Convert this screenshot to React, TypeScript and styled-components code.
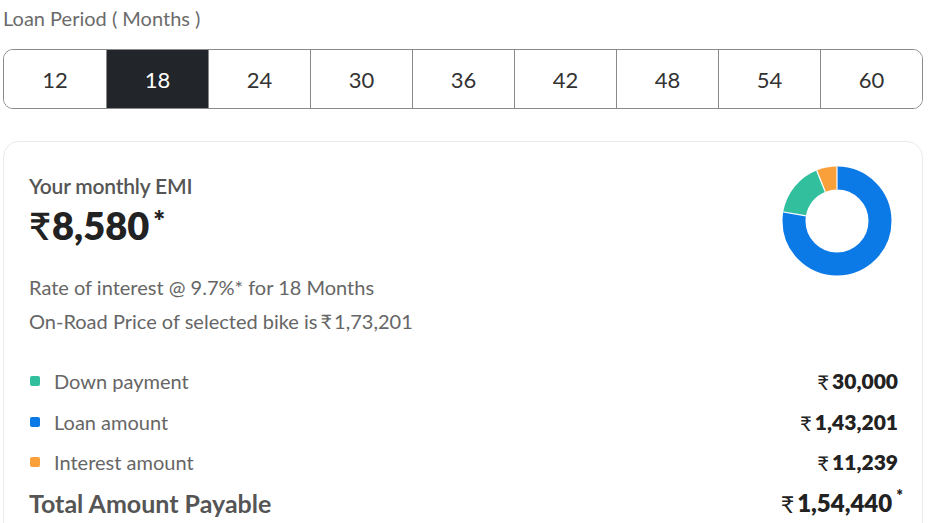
import React from "react";
import styled, { createGlobalStyle } from "styled-components";

const Global = createGlobalStyle`
  html, body { margin: 0; padding: 0; background: #ffffff; }
  body { font-family: Lato, "Noto Sans", sans-serif; }
`;

const Page = styled.div`
  padding: 6px 7px 0 3px;
  width: 930px;
  box-sizing: border-box;
  height: 523px;
  overflow: hidden;
`;

const Label = styled.div`
  font-size: 20px;
  line-height: 24px;
  color: #6b6b6b;
`;

const Segments = styled.div`
  margin-top: 19px;
  display: grid;
  grid-template-columns: repeat(9, 1fr);
  border: 1px solid #8a8a8a;
  border-radius: 10px;
  overflow: hidden;
  height: 60px;
  box-sizing: border-box;
`;

const Segment = styled.div<{ $active?: boolean }>`
  display: flex;
  align-items: center;
  justify-content: center;
  font-size: 22px;
  color: ${(p) => (p.$active ? "#ffffff" : "#333333")};
  background: ${(p) => (p.$active ? "#222529" : "#ffffff")};
  border-left: 1px solid #8a8a8a;
  &:first-child { border-left: none; }
`;

const Card = styled.div`
  margin-top: 32px;
  border: 1px solid #ebebeb;
  border-radius: 16px;
  padding: 24px 24px 40px 25px;
`;

const Top = styled.div`
  display: flex;
  justify-content: space-between;
  align-items: flex-start;
`;

const Summary = styled.div`
  display: flex;
  flex-direction: column;
`;

const EmiLabel = styled.div`
  margin-top: 8px;
  font-size: 21px;
  line-height: 24px;
  color: #555555;
  font-weight: 600;
  letter-spacing: -0.2px;
`;

const EmiValue = styled.div`
  margin-top: 5px;
  font-size: 38px;
  line-height: 44px;
  font-weight: 800;
  color: #222222;
  display: flex;
  align-items: flex-start;
`;

const Rupee = styled.span`
  font-weight: 600;
  margin-right: 1px;
`;

const Star = styled.span<{ $size: number; $top: number; $right?: number }>`
  font-size: ${(p) => p.$size}px;
  line-height: 1;
  margin-left: 4px;
  margin-top: ${(p) => p.$top}px;
  margin-right: ${(p) => p.$right ?? 0}px;
`;

const Donut = styled.svg`
  margin-right: 6px;
  flex: none;
`;

const Info = styled.div`
  margin-top: 23px;
  font-size: 20px;
  line-height: 34px;
  color: #666666;
`;

const InlineRupee = styled.span`
  margin: 0 2px 0 3px;
`;

const Rows = styled.div`
  margin-top: 23px;
  display: flex;
  flex-direction: column;
`;

const Row = styled.div`
  display: flex;
  justify-content: space-between;
  align-items: center;
  height: 40.5px;
`;

const Key = styled.div`
  display: flex;
  align-items: center;
  gap: 14px;
  font-size: 20px;
  color: #666666;
`;

const Dot = styled.span<{ $c: string }>`
  width: 10px;
  height: 10px;
  border-radius: 2px;
  background: ${(p) => p.$c};
  margin-left: 1px;
`;

const Val = styled.div<{ $size?: number }>`
  font-size: ${(p) => p.$size ?? 21}px;
  font-weight: 800;
  color: #222222;
  display: flex;
  align-items: flex-start;
`;

const SmallRupee = styled.span`
  font-weight: 400;
  margin-right: 3px;
  font-size: 0.97em;
  margin-top: 2px;
`;

const TotalKey = styled.div`
  font-size: 25px;
  font-weight: 700;
  color: #555555;
`;

const months = [12, 18, 24, 30, 36, 42, 48, 54, 60];

const data = [
  { label: "Down payment", value: 30000, color: "#32bf9e" },
  { label: "Loan amount", value: 143201, color: "#0b79e6" },
  { label: "Interest amount", value: 11239, color: "#f9a03b" },
];

const fmt = (n: number) => n.toLocaleString("en-IN");

function DonutChart() {
  const cx = 55, cy = 55, r = 43, sw = 23;
  const order = [data[1], data[0], data[2]];
  const total = order.reduce((s, d) => s + d.value, 0);
  const C = 2 * Math.PI * r;
  let acc = 0;
  return (
    <Donut width={110} height={110} viewBox="0 0 110 110">
      <g transform={`rotate(-90 ${cx} ${cy})`}>
        {order.map((d) => {
          const len = (d.value / total) * C;
          const el = (
            <circle
              key={d.label}
              cx={cx}
              cy={cy}
              r={r}
              fill="none"
              stroke={d.color}
              strokeWidth={sw}
              strokeDasharray={`${len} ${C - len}`}
              strokeDashoffset={-acc}
            />
          );
          acc += len;
          return el;
        })}
      </g>
      <g transform={`rotate(-90 ${cx} ${cy})`} stroke="#ffffff" strokeWidth={1.2}>
        {(() => {
          let a = 0;
          return order.map((d) => {
            const ang = (a / total) * 2 * Math.PI;
            a += d.value;
            return (
              <line
                key={d.label}
                x1={cx + (r - sw / 2) * Math.cos(ang)}
                y1={cy + (r - sw / 2) * Math.sin(ang)}
                x2={cx + (r + sw / 2) * Math.cos(ang)}
                y2={cy + (r + sw / 2) * Math.sin(ang)}
              />
            );
          });
        })()}
      </g>
    </Donut>
  );
}

export default function App() {
  return (
    <Page>
      <Global />
      <Label>Loan Period ( Months )</Label>
      <Segments>
        {months.map((m) => (
          <Segment key={m} $active={m === 18}>
            {m}
          </Segment>
        ))}
      </Segments>
      <Card>
        <Top>
          <Summary>
            <EmiLabel>Your monthly EMI</EmiLabel>
            <EmiValue>
              <Rupee>₹</Rupee>8,580<Star $size={28} $top={3}>*</Star>
            </EmiValue>
            <Info>
              <div>Rate of interest @ 9.7%* for 18 Months</div>
              <div>
                On-Road Price of selected bike is<InlineRupee>₹</InlineRupee>1,73,201
              </div>
            </Info>
          </Summary>
          <DonutChart />
        </Top>
        <Rows>
          {data.map((d) => (
            <Row key={d.label}>
              <Key>
                <Dot $c={d.color} />
                {d.label}
              </Key>
              <Val>
                <SmallRupee>₹</SmallRupee>
                {fmt(d.value)}
              </Val>
            </Row>
          ))}
          <Row>
            <TotalKey>Total Amount Payable</TotalKey>
            <Val $size={24}>
              <SmallRupee>₹</SmallRupee>1,54,440<Star $size={16} $top={0} $right={-5}>*</Star>
            </Val>
          </Row>
        </Rows>
      </Card>
    </Page>
  );
}
